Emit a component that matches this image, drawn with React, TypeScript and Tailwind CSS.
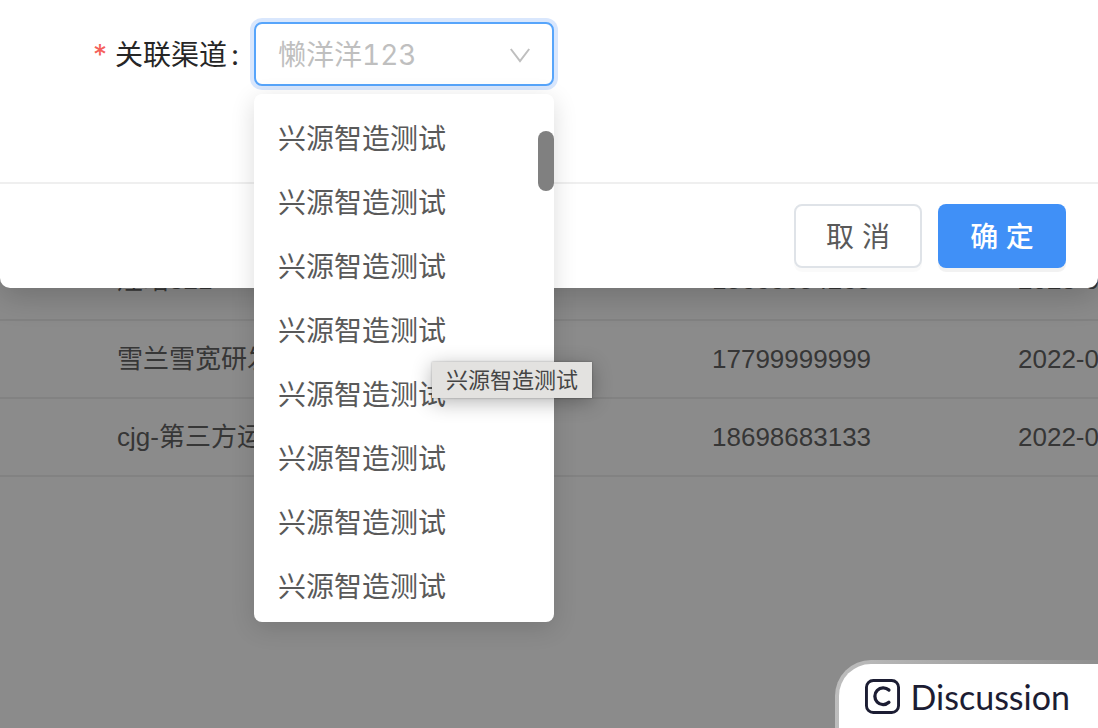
import { useState } from 'react'

const channels = Array.from({ length: 8 }, (_, i) => ({
  id: i + 1,
  name: '兴源智造测试'
}))

const rows = [
  { name: '煌暗321', phone: '18666684268', date: '2023-0' },
  { name: '雪兰雪宽研发', phone: '17799999999', date: '2022-0' },
  { name: 'cjg-第三方运', phone: '18698683133', date: '2022-0' }
]

const hoveredId = 5

function ChannelSelect() {
  const [channel, setChannel] = useState('懒洋洋123')

  return (
    <div className="relative w-[300px]">
      <select
        id="channel"
        value={channel}
        onChange={(e) => setChannel(e.target.value)}
        className="block h-16 w-full appearance-none rounded-lg border-2 border-[#57a5fb] bg-white px-[22px] pt-0.5 text-[28px] text-[#bfbfbf] tabular-nums outline-none ring-4 ring-[#d9e7fd]"
      >
        <option>懒洋洋123</option>
      </select>
      <svg
        className="pointer-events-none absolute top-[26px] right-6 h-4 w-5"
        viewBox="0 0 20 16"
        fill="none"
        stroke="#bfbfbf"
        strokeWidth="2"
      >
        <path d="M0.8 1L10 13.2L19.2 1" />
      </svg>

      <div className="absolute top-full left-0 mt-2 w-full rounded-lg bg-white pt-3 pb-1 shadow-[0_6px_24px_rgba(0,0,0,0.14)]">
        <ul role="listbox" aria-label="关联渠道">
          {channels.map((item) => (
            <li
              key={item.id}
              role="option"
              aria-selected={false}
              className="relative flex h-16 items-center px-6 pt-0.5 text-[28px] text-[#595959]"
              onClick={() => setChannel('懒洋洋123')}
            >
              {item.name}
              {item.id === hoveredId && (
                <span
                  role="tooltip"
                  className="absolute top-0 left-[178px] flex h-9 items-center bg-[#e3e2e0] px-3.5 text-[22px] whitespace-nowrap text-[#454545] shadow-[0_4px_20px_rgba(0,0,0,0.3),0_0_2px_rgba(0,0,0,0.3)]"
                >
                  {item.name}
                </span>
              )}
            </li>
          ))}
        </ul>
        <div className="absolute top-[37px] right-0 h-15 w-4 rounded-full bg-[#808080]"></div>
      </div>
    </div>
  )
}

function DiscussionBadge() {
  return (
    <div className="fixed right-0 bottom-0 z-20 rounded-tl-[36px] bg-linear-to-r from-[#bdbdbd] to-[#8f8f8f] pt-1 pl-1">
      <button className="flex h-16 items-center gap-[11px] rounded-tl-[32px] bg-white pr-7 pl-[26px] font-['Lato',sans-serif] text-[34px] text-[#1c1d33]">
        <svg
          className="h-[35px] w-[35px]"
          viewBox="0 0 36 36"
          fill="none"
          stroke="currentColor"
          strokeWidth="3"
          strokeLinecap="round"
        >
          <rect x="1.5" y="1.5" width="33" height="33" rx="7" />
          <path
            d="M24.6 11.4A8.6 8.6 0 1 0 24.6 24"
            strokeWidth="3.4"
          />
        </svg>
        Discussion
      </button>
    </div>
  )
}

export default function App() {
  return (
    <div className="min-h-screen overflow-hidden bg-[#8b8b8b] font-['Inter','Noto_Sans_CJK_SC',sans-serif]">
      <div
        role="dialog"
        className="relative z-10 rounded-b-[10px] bg-white shadow-[0_8px_32px_rgba(0,0,0,0.2)]"
      >
        <form className="flex h-[182px] items-start pt-[22px]">
          <label
            htmlFor="channel"
            className="flex h-16 w-[254px] items-center justify-end pt-0.5 pr-[15px] text-[28px] text-[#262626]"
          >
            <span className="mr-2 text-[#f5605b]">*</span>
            关联渠道
            <span className="ml-1">:</span>
          </label>
          <ChannelSelect />
        </form>
        <div className="flex justify-end gap-4 border-t-2 border-[#efefef] px-8 py-5 text-[28px]">
          <button className="h-16 w-32 rounded-lg border-2 border-[#dfe3e8] bg-white pt-0.5 text-[#595959] shadow-[0_4px_0_rgba(0,0,0,0.02)]">
            取 消
          </button>
          <button className="h-16 w-32 rounded-lg bg-[#4090f7] pt-0.5 font-medium text-white shadow-[0_4px_0_rgba(0,0,0,0.05)]">
            确 定
          </button>
        </div>
      </div>

      <table className="-mt-[46px] w-full table-fixed border-collapse font-['Liberation_Sans','Noto_Sans_CJK_SC',sans-serif] text-[26px] text-[#363636]">
        <colgroup>
          <col />
          <col className="w-[306px]" />
          <col className="w-20" />
        </colgroup>
        <tbody>
          {rows.map((row) => (
            <tr key={row.phone} className="h-[78px] border-b-2 border-[#828282]">
              <td className="pl-[117px]">{row.name}</td>
              <td className="whitespace-nowrap">{row.phone}</td>
              <td className="whitespace-nowrap">{row.date}</td>
            </tr>
          ))}
        </tbody>
      </table>

      <DiscussionBadge />
    </div>
  )
}
